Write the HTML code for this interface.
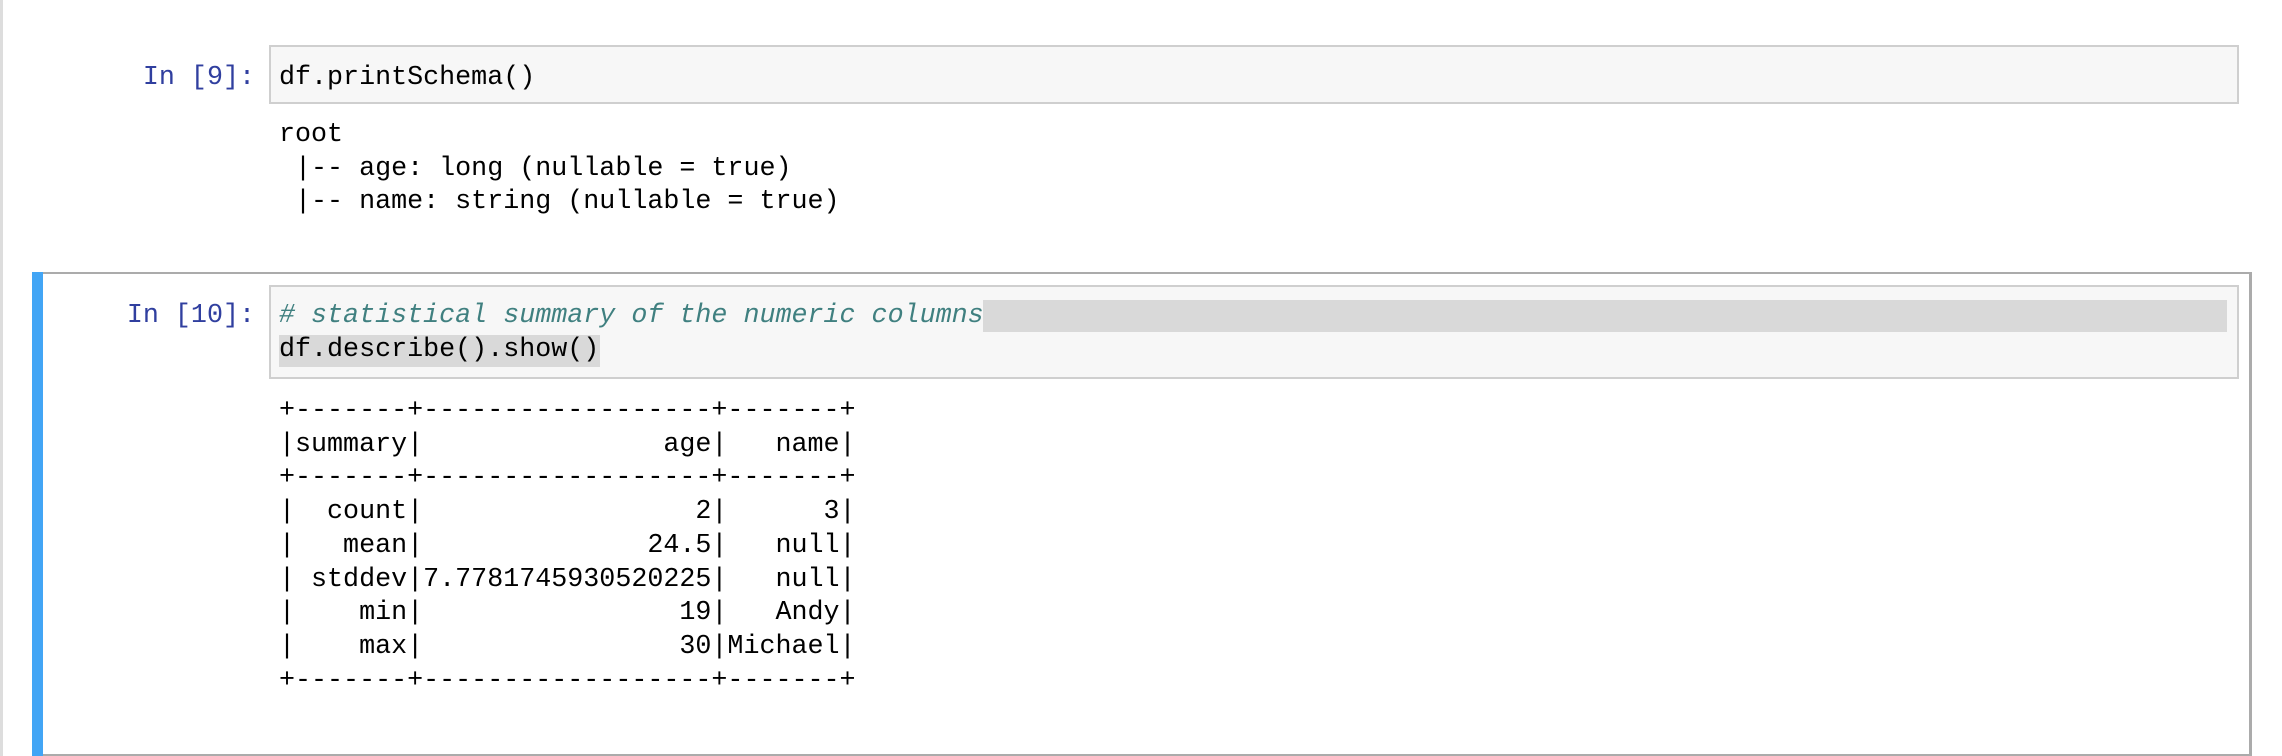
<!DOCTYPE html>
<html><head><meta charset="utf-8"><style>
html,body{margin:0;padding:0;background:#fff;width:2282px;height:756px;overflow:hidden;position:relative}
.mono{font-family:"Liberation Mono","DejaVu Sans Mono",monospace;font-size:26.7px;line-height:33.7px;white-space:pre;position:absolute}
.box{position:absolute;background:#f7f7f7;border:2px solid #cfcfcf;box-sizing:border-box}
.prompt{color:#303f9f;text-align:right}
.cm{color:#408080;font-style:italic}
</style></head><body>
<div style="position:absolute;left:0;top:0;width:3px;height:756px;background:#ddd"></div>

<div class="box" style="left:269px;top:45px;width:1970px;height:59px"></div>
<div class="mono prompt" style="left:100px;width:155px;top:62px">In [9]:</div>
<div class="mono" style="left:279px;top:62px">df.printSchema()</div>
<div class="mono" style="left:279px;top:119px">root
 |-- age: long (nullable = true)
 |-- name: string (nullable = true)</div>

<div style="position:absolute;left:32px;top:272px;width:2220px;height:484px;border:2px solid #ababab;border-right-width:3px;box-sizing:border-box"></div>
<div style="position:absolute;left:32px;top:272px;width:11px;height:484px;background:#42a5f5"></div>

<div class="box" style="left:269px;top:285px;width:1970px;height:94px"></div>
<div style="position:absolute;left:983px;top:300px;width:1244px;height:32px;background:#d9d9d9"></div>
<div style="position:absolute;left:279px;top:335px;width:321px;height:32px;background:#d9d9d9"></div>
<div class="mono prompt" style="left:88px;width:167px;top:300px">In [10]:</div>
<div class="mono" style="left:279px;top:300px"><span class="cm"># statistical summary of the numeric columns</span>
df.describe().show()</div>

<div class="mono" style="left:279px;top:395px">+-------+------------------+-------+
|summary|               age|   name|
+-------+------------------+-------+
|  count|                 2|      3|
|   mean|              24.5|   null|
| stddev|7.7781745930520225|   null|
|    min|                19|   Andy|
|    max|                30|Michael|
+-------+------------------+-------+</div>
</body></html>
